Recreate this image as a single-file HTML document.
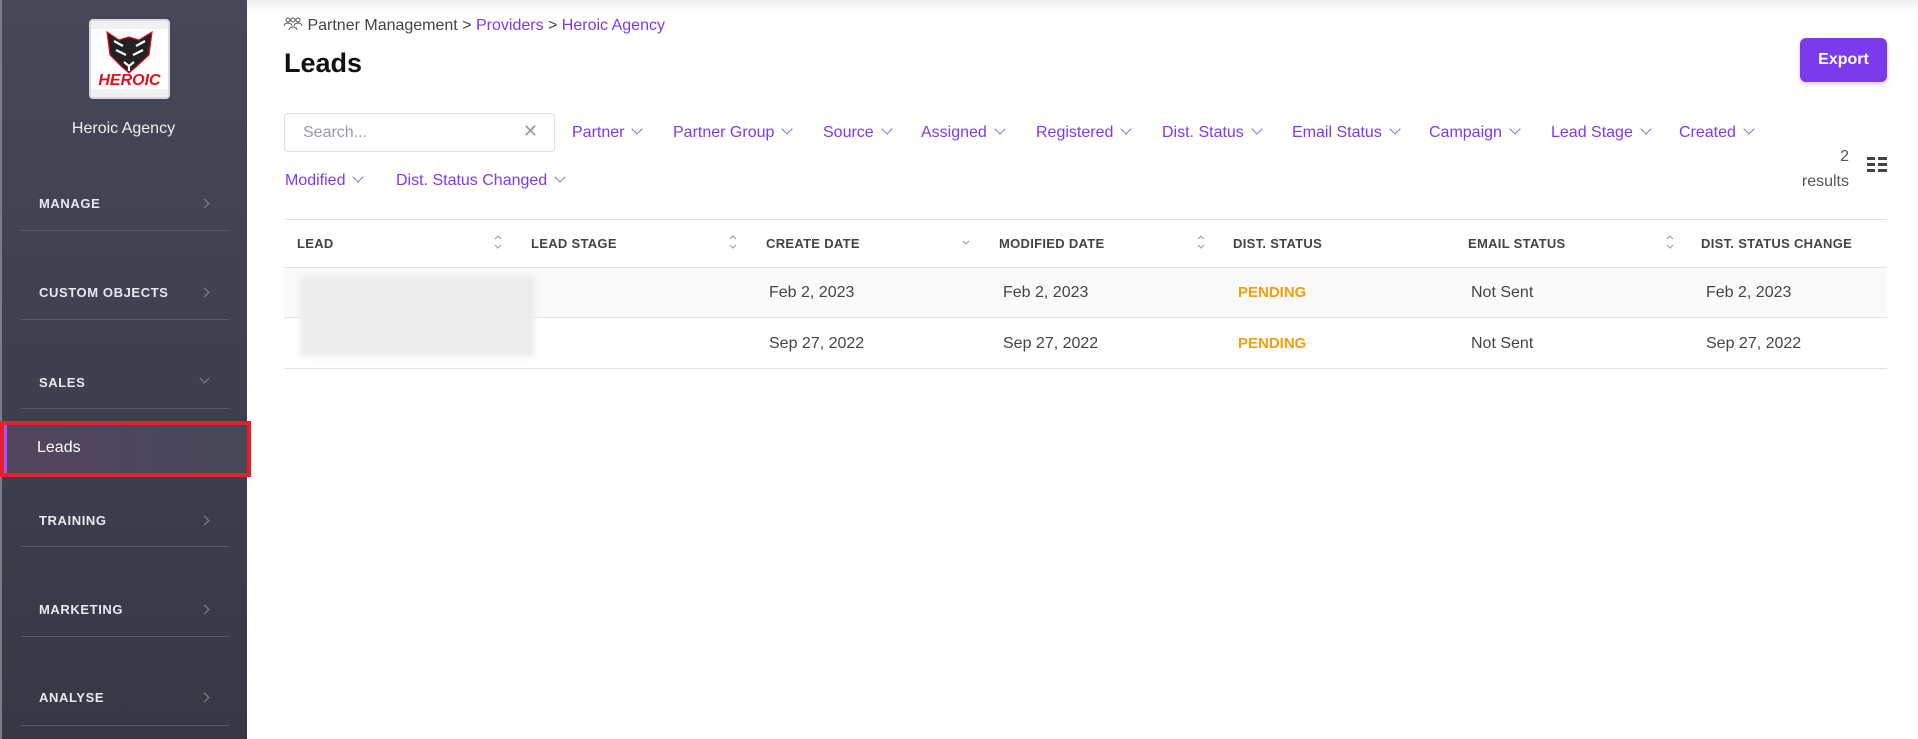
<!DOCTYPE html>
<html><head><meta charset="utf-8"><style>
*{margin:0;padding:0;box-sizing:border-box}
body{width:1918px;height:739px;overflow:hidden;font-family:"Liberation Sans",sans-serif;background:#fff;position:relative}
.sb{position:absolute;left:0;top:0;width:247px;height:739px;background:linear-gradient(#464858,#363846);border-left:2px solid #7a7c88}
.logo{position:absolute;left:89px;top:19px;width:81px;height:80px;background:#fff;border-radius:4px;border:2px solid #d9d6e0}
.ha{position:absolute;left:0;width:247px;text-align:center;top:120px;color:#eee;font-size:16px}
.sec{position:absolute;left:39px;color:#e8e8ee;font-weight:bold;font-size:13px;letter-spacing:.6px}
.chev{position:absolute;left:201px;width:7px;height:7px;border-right:1.5px solid #888;border-top:1.5px solid #888;transform:rotate(45deg)}
.ln{position:absolute;left:21px;width:208px;height:1px;background:#585a68}
.main{position:absolute;left:247px;top:0;right:0;height:12px;background:linear-gradient(#eee,#fff)}
.t{position:absolute;white-space:nowrap}
.p{color:#7c3aed;font-size:16px}
.dd{display:inline-block;width:8px;height:8px;border-right:1.2px solid #8b6be8;border-bottom:1.2px solid #8b6be8;transform:rotate(45deg);margin-left:9px;position:relative;top:-4px}
.th{font-size:13px;font-weight:bold;color:#444;letter-spacing:.3px;top:236px}
.td{font-size:16px;color:#444}
.pe{font-size:15px;color:#f59e0b;font-weight:bold}
.hl{position:absolute;left:284px;width:1603px;height:1px;background:#e2e2e2}
.so{position:absolute;top:233px;width:8px;height:18px}
</style></head><body>
<div class="sb"></div>
<div class="logo"><svg width="77" height="76" viewBox="0 0 77 76">
<rect x="0" y="0" width="77" height="8" fill="#f1f0f3"/><rect x="0" y="68" width="77" height="8" fill="#f1f0f3"/>
<path d="M16 11 L28 19 L38 16 L48 19 L61 11 L58 34 L46 45 L38 52 L30 45 L19 34 Z" fill="#222" stroke="#e0111b" stroke-width="1.2"/>
<path d="M23 20 L32 25 M54 20 L45 25 M25 29 L35 34 M52 29 L42 34 M33 41 L38 45 L43 41 M38 45 L38 50" stroke="#fff" stroke-width="2.2" fill="none"/>
<text x="38.5" y="64" text-anchor="middle" font-family="Liberation Sans" font-weight="bold" font-style="italic" font-size="16" fill="#e0111b">HEROIC</text></svg></div>
<div class="ha">Heroic Agency</div>
<div class="sec" style="top:196px">MANAGE</div><div class="chev" style="top:200px"></div><div class="ln" style="top:230px"></div>
<div class="sec" style="top:285px">CUSTOM OBJECTS</div><div class="chev" style="top:289px"></div><div class="ln" style="top:319px"></div>
<div class="sec" style="top:375px">SALES</div><div class="chev" style="top:375px;transform:rotate(135deg)"></div><div class="ln" style="top:408px"></div>
<div style="position:absolute;left:0;top:421px;width:251px;height:56px;border:4px solid #e3202b;background:linear-gradient(90deg,#54455e,#464858)"><div style="position:absolute;left:0;top:0;width:3px;height:48px;background:#a855f7"></div><span style="position:absolute;left:33px;top:14px;color:#fff;font-size:16px">Leads</span></div>
<div class="sec" style="top:513px">TRAINING</div><div class="chev" style="top:517px"></div><div class="ln" style="top:546px"></div>
<div class="sec" style="top:602px">MARKETING</div><div class="chev" style="top:606px"></div><div class="ln" style="top:636px"></div>
<div class="sec" style="top:690px">ANALYSE</div><div class="chev" style="top:694px"></div><div class="ln" style="top:725px"></div>
<div class="main"></div>
<div class="t" style="left:283px;top:17px;font-size:16px;color:#444"><svg width="20" height="14" viewBox="0 0 20 14" style="vertical-align:-1px"><g fill="none" stroke="#555" stroke-width="1"><circle cx="5" cy="3" r="2"/><circle cx="10" cy="3" r="2"/><circle cx="15" cy="3" r="2"/><path d="M1 9a4 3 0 0 1 8 0M11 9a4 3 0 0 1 8 0M6 13a4 3 0 0 1 8 0"/></g></svg> Partner Management &gt; <span style="color:#7c3aed">Providers</span> &gt; <span style="color:#7c3aed">Heroic Agency</span></div>
<div class="t" style="left:284px;top:48px;font-size:27px;font-weight:bold;color:#111">Leads</div>
<div class="t" style="left:1800px;top:38px;width:87px;height:44px;background:#7c3aed;border-radius:6px;color:#fff;font-size:16px;font-weight:bold;text-align:center;line-height:44px;box-shadow:0 2px 5px rgba(124,58,237,.3)">Export</div>
<div class="t" style="left:284px;top:113px;width:271px;height:39px;border:1px solid #ddd;border-radius:4px"><span style="position:absolute;left:18px;top:10px;color:#9a9aa6;font-size:16px">Search...</span><span style="position:absolute;right:16px;top:7px;color:#999;font-size:18px">✕</span></div>
<div class="t p" style="left:572px;top:124px">Partner<i class="dd"></i></div>
<div class="t p" style="left:673px;top:124px">Partner Group<i class="dd"></i></div>
<div class="t p" style="left:823px;top:124px">Source<i class="dd"></i></div>
<div class="t p" style="left:921px;top:124px">Assigned<i class="dd"></i></div>
<div class="t p" style="left:1036px;top:124px">Registered<i class="dd"></i></div>
<div class="t p" style="left:1162px;top:124px">Dist. Status<i class="dd"></i></div>
<div class="t p" style="left:1292px;top:124px">Email Status<i class="dd"></i></div>
<div class="t p" style="left:1429px;top:124px">Campaign<i class="dd"></i></div>
<div class="t p" style="left:1551px;top:124px">Lead Stage<i class="dd"></i></div>
<div class="t p" style="left:1679px;top:124px">Created<i class="dd"></i></div>
<div class="t p" style="left:285px;top:172px">Modified<i class="dd"></i></div>
<div class="t p" style="left:396px;top:172px">Dist. Status Changed<i class="dd"></i></div>
<div class="t" style="left:1780px;top:144px;width:69px;text-align:right;font-size:16px;color:#555;line-height:25px">2<br>results</div>
<svg class="t" style="left:1867px;top:157px" width="22" height="18"><g fill="#444"><rect x="0" y="0" width="8" height="3"/><rect x="11" y="0" width="9" height="3"/><rect x="0" y="6" width="8" height="3"/><rect x="11" y="6" width="9" height="3"/><rect x="0" y="12" width="8" height="3"/><rect x="11" y="12" width="9" height="3"/></g></svg>
<div class="hl" style="top:219px"></div>
<div style="position:absolute;left:284px;top:267px;width:1603px;height:50px;background:#fafafa"></div>
<div class="hl" style="top:267px"></div><div class="hl" style="top:317px"></div><div class="hl" style="top:368px"></div>
<div class="t th" style="left:297px">LEAD</div>
<div class="t th" style="left:531px">LEAD STAGE</div>
<div class="t th" style="left:766px">CREATE DATE</div>
<div class="t th" style="left:999px">MODIFIED DATE</div>
<div class="t th" style="left:1233px">DIST. STATUS</div>
<div class="t th" style="left:1468px">EMAIL STATUS</div>
<div class="t th" style="left:1701px">DIST. STATUS CHANGE</div>
<svg class="so" style="left:494px"><path d="M1 6l3-3 3 3M1 12l3 3 3-3" stroke="#999" fill="none"/></svg>
<svg class="so" style="left:729px"><path d="M1 6l3-3 3 3M1 12l3 3 3-3" stroke="#999" fill="none"/></svg>
<svg class="so" style="left:962px"><path d="M1 8l3 3 3-3" stroke="#999" fill="none"/></svg>
<svg class="so" style="left:1197px"><path d="M1 6l3-3 3 3M1 12l3 3 3-3" stroke="#999" fill="none"/></svg>
<svg class="so" style="left:1666px"><path d="M1 6l3-3 3 3M1 12l3 3 3-3" stroke="#999" fill="none"/></svg>
<div style="position:absolute;left:300px;top:276px;width:235px;height:81px;background:#ececec;filter:blur(3px)"></div>
<div class="t td" style="left:769px;top:284px">Feb 2, 2023</div>
<div class="t td" style="left:1003px;top:284px">Feb 2, 2023</div>
<div class="t pe" style="left:1238px;top:284px">PENDING</div>
<div class="t td" style="left:1471px;top:284px">Not Sent</div>
<div class="t td" style="left:1706px;top:284px">Feb 2, 2023</div>
<div class="t td" style="left:769px;top:335px">Sep 27, 2022</div>
<div class="t td" style="left:1003px;top:335px">Sep 27, 2022</div>
<div class="t pe" style="left:1238px;top:335px">PENDING</div>
<div class="t td" style="left:1471px;top:335px">Not Sent</div>
<div class="t td" style="left:1706px;top:335px">Sep 27, 2022</div>
</body></html>
